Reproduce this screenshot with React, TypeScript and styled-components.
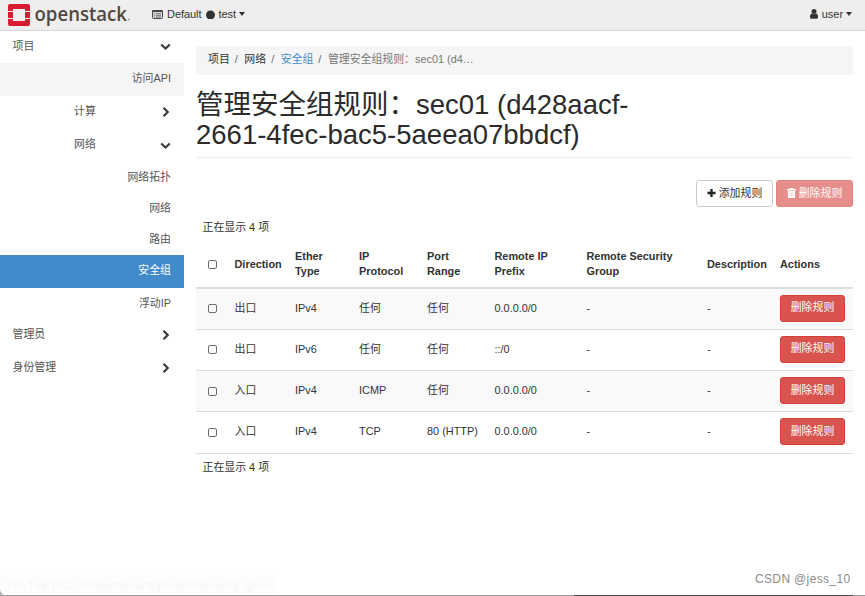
import React from 'react';
import styled, { createGlobalStyle } from 'styled-components';

const Global = createGlobalStyle`
  * { box-sizing: border-box; }
  body {
    margin: 0;
    background: #fff;
    color: #333;
    font: 10.9px/15px "Liberation Sans", "Noto Sans CJK SC", sans-serif;
  }
`;

const Page = styled.div`
  width: 865px;
  height: 596px;
  display: flex;
  flex-direction: column;
  overflow: hidden;
`;

const Navbar = styled.header`
  height: 31px;
  flex: none;
  display: flex;
  align-items: center;
  padding: 0 13px 2px 8px;
  background: #eee;
  border-bottom: 1px solid #d4d4d4;
`;

const Logo = styled.svg`
  flex: none;
  width: 124px;
  height: 29px;
  overflow: visible;
`;

const NavMenu = styled.div<{ $end?: boolean }>`
  display: flex;
  align-items: center;
  gap: 4px;
  margin-left: ${p => (p.$end ? 'auto' : '20px')};
`;

const NavText = styled.span`
  font-size: 11px;
  letter-spacing: -0.05px;
`;

const Caret = styled.span`
  border: 3.5px solid transparent;
  border-top: 4px solid #333;
  border-bottom: 0;
  margin-left: -1px;
`;

const Body = styled.div`
  display: flex;
  flex: 1;
  min-height: 0;
`;

const Sidebar = styled.nav`
  width: 183.5px;
  flex: none;
`;

const NavItem = styled.a<{ $level: number; $height: number; $tone?: 'open' | 'active' }>`
  display: flex;
  align-items: center;
  justify-content: ${p => (p.$level === 2 ? 'flex-end' : 'space-between')};
  height: ${p => p.$height}px;
  padding: 0 ${p => (p.$level === 2 ? 12.5 : 12)}px ${p => (p.$height === 31 ? 0 : 2)}px
    ${p => (p.$level === 1 ? 74 : 12.5)}px;
  color: ${p => (p.$tone === 'active' ? '#fff' : '#555')};
  background: ${p => (p.$tone === 'active' ? '#428bca' : p.$tone === 'open' ? '#f5f5f5' : 'transparent')};
`;

const Main = styled.main`
  width: 657px;
  margin-left: 12.5px;
  padding-top: 15px;
`;

const Breadcrumb = styled.div`
  display: flex;
  height: 29px;
  padding: 6px 12px;
  border-radius: 3px;
  background: #f5f5f5;
`;

const Crumb = styled.span<{ $color?: string }>`
  color: ${p => p.$color || '#333'};
  &:not(:last-child)::after {
    content: '/';
    color: #666;
    padding: 0 6.5px 0 5px;
  }
`;

const Title = styled.h1`
  height: 69px;
  margin: 14px 0 0;
  padding-top: 1px;
  border-bottom: 1px solid #eee;
  color: #2b2b2b;
  font-size: 27.5px;
  line-height: 30px;
  font-weight: 400;
`;

const Toolbar = styled.div`
  display: flex;
  justify-content: flex-end;
  gap: 3px;
  padding-top: 22px;
`;

const Button = styled.button<{ $danger?: boolean; $faded?: boolean; $width: number }>`
  display: inline-flex;
  align-items: center;
  justify-content: center;
  gap: 2px;
  width: ${p => p.$width}px;
  height: 27px;
  padding: 0 0 1px;
  border: 1px solid ${p => (p.$danger ? '#d43f3a' : '#ccc')};
  border-radius: 3px;
  background: ${p => (p.$danger ? '#d9534f' : '#fff')};
  color: ${p => (p.$danger ? '#fff' : '#333')};
  opacity: ${p => (p.$faded ? 0.65 : 1)};
  font: inherit;
  vertical-align: top;
`;

const Count = styled.div<{ $top: number }>`
  padding: ${p => p.$top}px 0 0 6.5px;
  height: ${p => p.$top + 15}px;
`;

const Table = styled.table`
  width: 657px;
  margin-top: 5px;
  table-layout: fixed;
  border-collapse: collapse;
`;

const Col = styled.col<{ $w: number }>`
  width: ${p => p.$w}px;
`;

const Th = styled.th`
  height: 48px;
  padding: 1px 0 0 6.5px;
  text-align: left;
  vertical-align: middle;
  border-bottom: 2px solid #ddd;
`;

const Tr = styled.tr<{ $striped: boolean }>`
  height: 41.25px;
  background: ${p => (p.$striped ? '#f9f9f9' : '#fff')};
  border-bottom: 1px solid #ddd;
`;

const Td = styled.td`
  padding: 0 0 1px 6.5px;
  vertical-align: middle;
`;

const Check = styled.input`
  appearance: none;
  display: block;
  width: 9px;
  height: 9px;
  margin: 1px 0 0 5px;
  border: 1px solid #6c6c6c;
  border-radius: 2px;
  background: #fff;
`;

const Watermark = styled.div`
  position: absolute;
  left: 755px;
  top: 572px;
  color: #8b8b8b;
  font-size: 12px;
  letter-spacing: 0.35px;
`;

const StatusText = styled.div`
  position: absolute;
  left: 0;
  top: 574px;
  width: 276px;
  height: 20px;
  padding: 3px 5px;
  overflow: hidden;
  white-space: nowrap;
  background: #fdfdfd;
  color: #f6f6f6;
  font: 11.3px/15px "Noto Sans", sans-serif;
`;

const WindowEdge = styled.div`
  flex: none;
  height: 1px;
  background: linear-gradient(to right, #999 574px, #4a4a4a 574px, #4a4a4a 853px, #999 853px);
`;

const WindowCorner = styled.svg`
  position: absolute;
  left: 0;
  top: 589px;
`;

const Chevron = ({ down }: { down?: boolean }) => (
  <svg width="12" height="12" viewBox="0 0 12 12" fill="none" stroke="#3c3c3c" strokeWidth="2.2">
    <path d={down ? 'M1.200 4.500 5.500 8.600l4.300-4.100' : 'M3.500 1.800 7.700 6 3.500 10.200'} />
  </svg>
);

const navigation: { label: string; level: number; height: number; tone?: 'open' | 'active'; down?: boolean }[] = [
  { label: '项目', level: 0, height: 32, down: true },
  { label: '访问API', level: 2, height: 33, tone: 'open' },
  { label: '计算', level: 1, height: 33 },
  { label: '网络', level: 1, height: 33, down: true },
  { label: '网络拓扑', level: 2, height: 31 },
  { label: '网络', level: 2, height: 31 },
  { label: '路由', level: 2, height: 31 },
  { label: '安全组', level: 2, height: 33, tone: 'active' },
  { label: '浮动IP', level: 2, height: 31 },
  { label: '管理员', level: 0, height: 33 },
  { label: '身份管理', level: 0, height: 33 },
];

const columns = [
  { name: '', width: 32 },
  { name: 'Direction', width: 60.5 },
  { name: 'Ether\nType', width: 64 },
  { name: 'IP\nProtocol', width: 68 },
  { name: 'Port\nRange', width: 67.5 },
  { name: 'Remote IP\nPrefix', width: 92 },
  { name: 'Remote Security\nGroup', width: 120.5 },
  { name: 'Description', width: 73 },
  { name: 'Actions', width: 79.5 },
];

const rules = [
  ['出口', 'IPv4', '任何', '任何', '0.0.0.0/0', '-', '-'],
  ['出口', 'IPv6', '任何', '任何', '::/0', '-', '-'],
  ['入口', 'IPv4', 'ICMP', '任何', '0.0.0.0/0', '-', '-'],
  ['入口', 'IPv4', 'TCP', '80 (HTTP)', '0.0.0.0/0', '-', '-'],
];

const HeaderText = styled.span`
  white-space: pre-line;
`;

export default function App() {
  return (
    <Page>
      <Global />
      <Navbar>
        <Logo viewBox="0 0 124 29">
          <path
            fill="#da1a32"
            d="M2 4h18a2 2 0 0 1 2 2v5h-5V9H5v2H0V6a2 2 0 0 1 2-2zM0 12h5v6H0zM17 12h5v6h-5zM0 19h5v2h12v-2h5v5a2 2 0 0 1-2 2H2a2 2 0 0 1-2-2z"
          />
          <text x="26.500" y="20.500" fill="#51483f" fontFamily="Open Sans" fontWeight="600" fontSize="20" textLength="92.500" lengthAdjust="spacingAndGlyphs">
            openstack
          </text>
          <circle cx="121" cy="19.500" r="0.9" fill="#999" />
        </Logo>
        <NavMenu>
          <svg width="11" height="9" viewBox="0 0 11 9">
            <rect x=".5" y=".5" width="10" height="8" rx="1" fill="#ddd" stroke="#444" />
            <path d="M0 1.200h11" stroke="#444" strokeWidth="1.600" />
            <path d="M2 3.600h1.200M4 3.600h5M2 5.300h1.200M4 5.300h5M2 7h1.200M4 7h5" stroke="#666" strokeWidth=".9" />
          </svg>
          <NavText>Default</NavText>
          <svg width="9" height="10" viewBox="0 0 9 10">
            <circle cx="4.500" cy="6" r="4.500" fill="#333" />
          </svg>
          <NavText>test</NavText>
          <Caret />
        </NavMenu>
        <NavMenu $end>
          <svg width="8" height="10" viewBox="0 0 8 10" fill="#333">
            <circle cx="4" cy="2.600" r="2.500" />
            <path d="M1.800 4.400C.6 4.800 0 6 0 8c0 1 .5 1.700 1.300 1.700h5.400C7.500 9.700 8 9 8 8c0-2-.6-3.200-1.800-3.600-1.300 1-3.100 1-4.400 0z" />
          </svg>
          <NavText>user</NavText>
          <Caret />
        </NavMenu>
      </Navbar>
      <Body>
        <Sidebar>
          {navigation.map((n, i) => (
            <NavItem key={i} $level={n.level} $height={n.height} $tone={n.tone}>
              {n.label}
              {n.level < 2 && <Chevron down={n.down} />}
            </NavItem>
          ))}
        </Sidebar>
        <Main>
          <Breadcrumb>
            <Crumb>项目</Crumb>
            <Crumb>网络</Crumb>
            <Crumb $color="#428bca">安全组</Crumb>
            <Crumb $color="#777">管理安全组规则：sec01 (d4…</Crumb>
          </Breadcrumb>
          <Title>
            管理安全组规则：sec01 (d428aacf-
            <br />
            2661-4fec-bac5-5aeea07bbdcf)
          </Title>
          <Toolbar>
            <Button $width={77}>
              <svg width="10" height="10" viewBox="0 0 10 10">
                <path d="M4.500 1v8M.5 5h8" stroke="#222" strokeWidth="2.300" />
              </svg>
              添加规则
            </Button>
            <Button $width={77} $danger $faded>
              <svg width="10" height="10" viewBox="0 0 10 10" fill="#fff">
                <path d="M2.800 0h3.400v1H9v1.500H0V1h2.800zM.9 3h7.200v6.300a.7.7 0 0 1-.7.7H1.600a.7.7 0 0 1-.7-.7z" />
                <path d="M2.900 4.300v4M4.500 4.300v4M6.100 4.300v4" stroke="#e78783" strokeWidth=".5" />
              </svg>
              删除规则
            </Button>
          </Toolbar>
          <Count $top={13}>正在显示 4 项</Count>
          <Table>
            <colgroup>
              {columns.map((c, i) => (
                <Col key={i} $w={c.width} />
              ))}
            </colgroup>
            <thead>
              <tr>
                {columns.map((c, i) => (
                  <Th key={i}>{i === 0 ? <Check type="checkbox" /> : <HeaderText>{c.name}</HeaderText>}</Th>
                ))}
              </tr>
            </thead>
            <tbody>
              {rules.map((r, i) => (
                <Tr key={i} $striped={i % 2 === 0}>
                  <Td>
                    <Check type="checkbox" />
                  </Td>
                  {r.map((v, j) => (
                    <Td key={j}>{v}</Td>
                  ))}
                  <Td>
                    <Button $width={65} $danger>
                      删除规则
                    </Button>
                  </Td>
                </Tr>
              ))}
            </tbody>
          </Table>
          <Count $top={6}>正在显示 4 项</Count>
        </Main>
      </Body>
      <WindowEdge />
      <StatusText>192.168.100.142/dashboard/project/security_grou</StatusText>
      <WindowCorner width="7" height="7" viewBox="0 0 7 7">
        <path d="M0 0c.5 4 2.500 6 6.500 7H0z" fill="#aaa" />
      </WindowCorner>
      <Watermark>CSDN @jess_10</Watermark>
    </Page>
  );
}
